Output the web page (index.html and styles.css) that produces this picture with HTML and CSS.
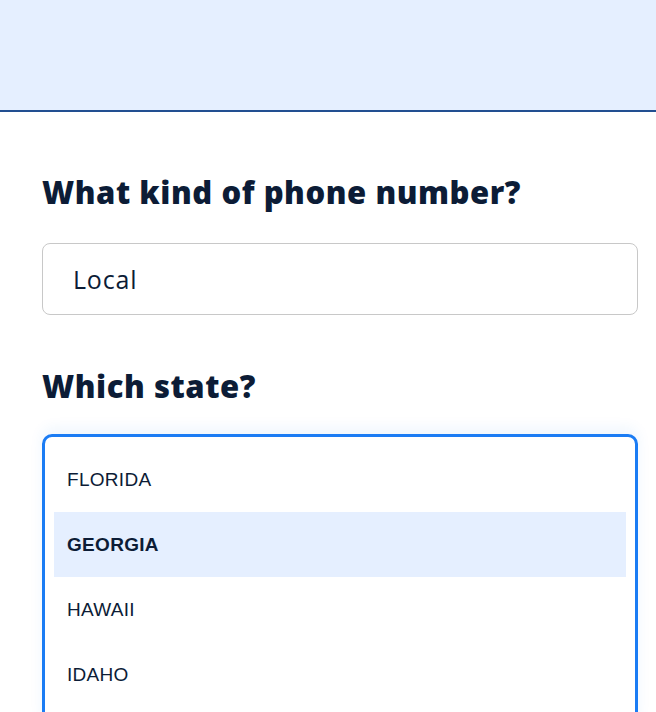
FILE: index.html
```html
<!DOCTYPE html>
<html>
<head>
<meta charset="utf-8">
<link rel="stylesheet" href="styles.css">
</head>
<body>
<header class="topbar"></header>
<main class="content">
  <h2 class="question">What kind of phone number?</h2>
  <div class="select-box">Local</div>
  <h2 class="question q2">Which state?</h2>
  <ul class="listbox">
    <li class="option">FLORIDA</li>
    <li class="option active">GEORGIA</li>
    <li class="option">HAWAII</li>
    <li class="option">IDAHO</li>
  </ul>
</main>
</body>
</html>
```
FILE: styles.css
```css
html, body {
  margin: 0;
  padding: 0;
  background: #ffffff;
  overflow: hidden;
  height: 712px;
}
body {
  font-family: "Open Sans", "Liberation Sans", sans-serif;
  color: #0c1c36;
}
.topbar {
  height: 110px;
  background: #e5efff;
  border-bottom: 2px solid #224f91;
}
.content {
  padding: 60px 18px 0 42px;
}
.question {
  margin: 0;
  font-family: "Open Sans", sans-serif;
  font-weight: 800;
  font-size: 31px;
  line-height: 40px;
  color: #0c1c36;
  letter-spacing: 0.55px;
}
.select-box {
  margin-top: 31px;
  height: 70px;
  border: 1px solid #c8c8c8;
  border-radius: 8px;
  box-sizing: content-box;
  display: flex;
  align-items: center;
  padding-left: 30px;
  font-family: "Open Sans", sans-serif;
  font-size: 25px;
  letter-spacing: 0.8px;
  color: #0c1c36;
}
.q2 {
  margin-top: 51px;
}
.listbox {
  list-style: none;
  margin: 28px 0 0 0;
  padding: 10px 9px 20px;
  border: 3px solid #1b7cf4;
  border-radius: 10px;
  box-shadow: 0 -6px 14px rgba(27, 124, 244, 0.07);
}
.option {
  height: 65px;
  display: flex;
  align-items: center;
  padding-left: 13px;
  font-family: "Liberation Sans", "Arial", sans-serif;
  font-size: 19px;
  color: #0c1c36;
  letter-spacing: 0.3px;
}
.option.active {
  background: #e5efff;
  font-weight: 700;
}
```
